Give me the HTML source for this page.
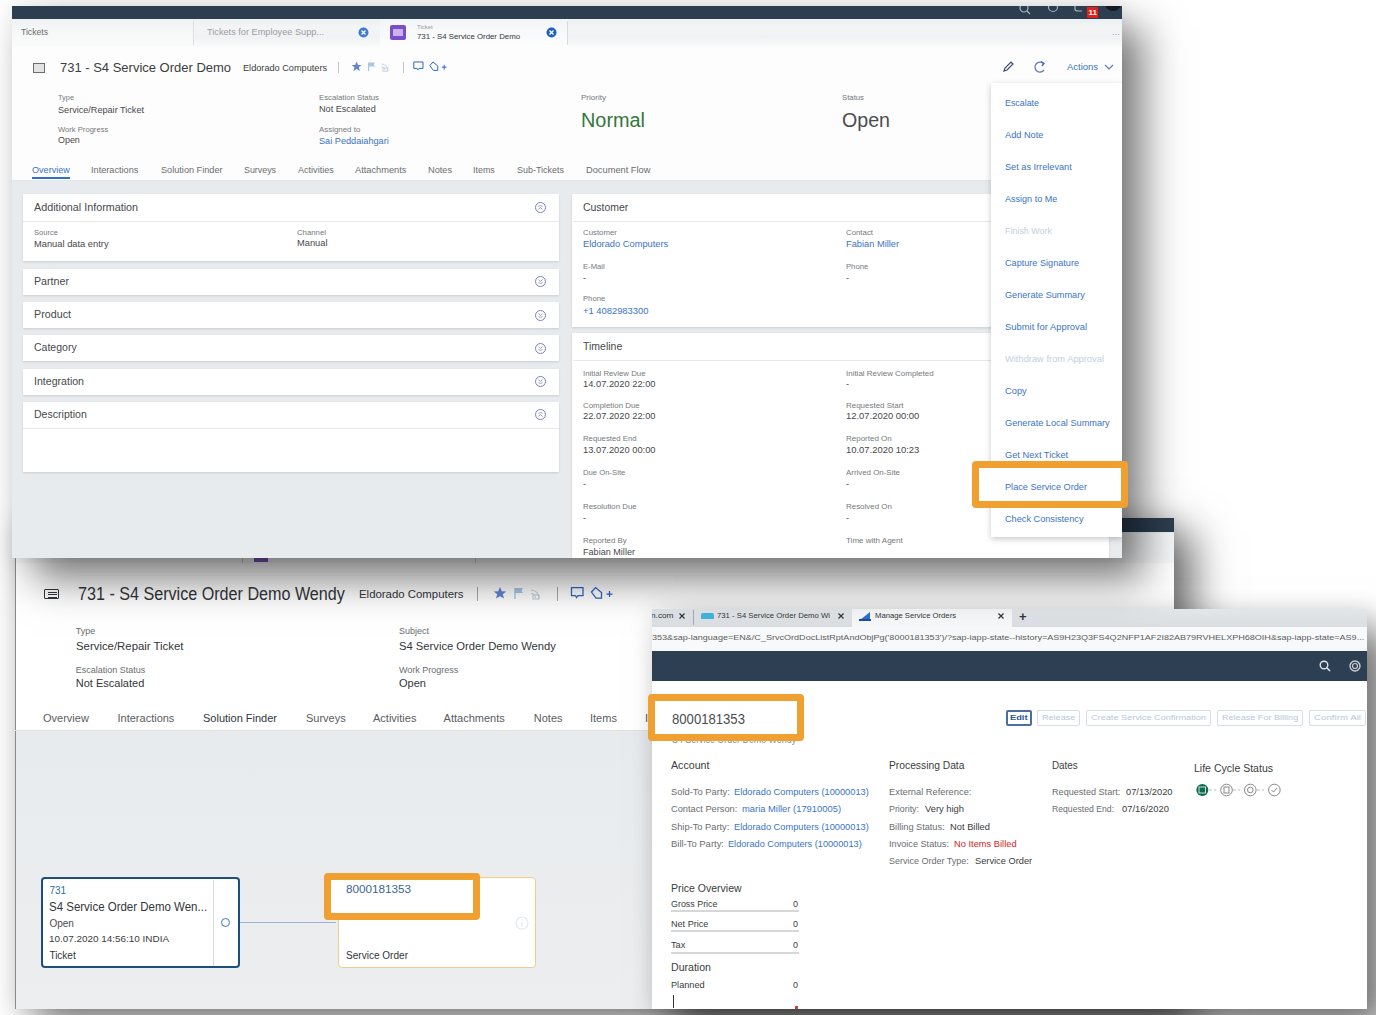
<!DOCTYPE html>
<html><head><meta charset="utf-8">
<style>
*{margin:0;padding:0;box-sizing:border-box}
html,body{width:1376px;height:1015px;overflow:hidden;background:#fff;font-family:"Liberation Sans",sans-serif;color:#32363a}
.layer{position:absolute;left:0;top:0;width:1376px;height:1015px}
.a{position:absolute;white-space:nowrap;line-height:1}
</style></head><body>

<div class="a" style="left:15px;top:518px;width:1159px;height:491px;box-shadow:20px 14px 38px 0 rgba(0,0,0,0.55)"></div>
<div class="a" style="left:15px;top:518px;width:1159px;height:491px;box-shadow:0 0 20px 2px rgba(0,0,0,.08)"></div>
<div class="layer" id="s2" style="clip-path:inset(518px 202px 6px 15px)">
<div class="a" style="left:15px;top:518px;width:1159px;height:492px;background:#fff;"></div>
<div class="a" style="left:15px;top:518px;width:1159px;height:14px;background:#2c3e50;"></div>
<div class="a" style="left:15px;top:532px;width:1159px;height:1px;background:#e6f2f2;"></div>
<div class="a" style="left:15px;top:533px;width:1159px;height:30px;background:#f7f8f9;"></div>
<div class="a" style="left:242px;top:540px;width:1px;height:25px;background:#ccc;"></div>
<div class="a" style="left:475px;top:540px;width:1px;height:25px;background:#ccc;"></div>
<div class="a" style="left:254px;top:552px;width:14px;height:10px;background:#7b52b9;"></div>
<div class="a" style="left:15px;top:563px;width:1159px;height:167px;background:#fff;"></div>
<div class="a" style="left:15px;top:518px;width:1px;height:492px;background:#8a8a8a;"></div>
<div class="a" style="left:44px;top:588.7px;width:15px;height:10.5px;background:#fff;border:1.5px solid #32363a;border-radius:1px"></div>
<div class="a" style="left:48px;top:591.5px;width:9px;height:1.3px;background:#32363a;"></div>
<div class="a" style="left:48px;top:594px;width:9px;height:1.3px;background:#32363a;"></div>
<div class="a" style="left:48px;top:596.5px;width:9px;height:1.3px;background:#32363a;"></div>
<div class="a" id="t1" style="left:77.7px;top:584.7px;font-size:18px;color:#32363a;transform:scaleX(0.896);transform-origin:0 0;">731 - S4 Service Order Demo Wendy</div>
<div class="a" id="t2" style="left:358.7px;top:588.6px;font-size:11px;color:#32363a;transform:scaleX(1.036);transform-origin:0 0;">Eldorado Computers</div>
<div class="a" style="left:477px;top:587px;width:1px;height:14px;background:#aaa;"></div>
<svg class="a" style="left:492.5px;top:584.5px;overflow:visible" width="125.0" height="16.0" viewBox="0 0 125 16"><path d="M7 2 L8.8 6.2 L13.2 6.4 L9.8 9.2 L11 13.6 L7 11.2 L3 13.6 L4.2 9.2 L0.8 6.4 L5.2 6.2 Z" fill="#5f86d6"/><path d="M22 3 v11" stroke="#a9c6e6" stroke-width="1.4"/><path d="M22 3 h8 l-1.5 2.5 l1.5 2.5 h-8 Z" fill="#a9c6e6"/><g fill="none" stroke="#c5d3e3" stroke-width="1.2"><path d="M38 5 a8 8 0 0 1 8 8"/><path d="M38 8.5 a4.5 4.5 0 0 1 4.5 4.5"/><rect x="40" y="10" width="6" height="4"/></g><g fill="none" stroke="#2a66c8" stroke-width="1.25"><path d="M78.5 2.5 h11.5 v8 h-5 l-1.5 2 l-1 -2 h-4 Z"/><path d="M98.5 7 l4 -4.5 l6 5 v5.5 h-5.5 Z"/><path d="M113.5 9 h6 M116.5 6 v6"/></g></svg>
<div class="a" style="left:557px;top:587px;width:1px;height:14px;background:#aaa;"></div>
<div class="a" id="t3" style="left:75.8px;top:626.6px;font-size:9px;color:#6a6d70;">Type</div>
<div class="a" id="t4" style="left:75.8px;top:640.9px;font-size:11px;color:#32363a;transform:scaleX(1.034);transform-origin:0 0;">Service/Repair Ticket</div>
<div class="a" id="t5" style="left:75.8px;top:665.9px;font-size:9px;color:#6a6d70;">Escalation Status</div>
<div class="a" id="t6" style="left:75.8px;top:678.3px;font-size:11px;color:#32363a;">Not Escalated</div>
<div class="a" id="t7" style="left:399px;top:626.6px;font-size:9px;color:#6a6d70;">Subject</div>
<div class="a" id="t8" style="left:399px;top:640.9px;font-size:11px;color:#32363a;transform:scaleX(1.020);transform-origin:0 0;">S4 Service Order Demo Wendy</div>
<div class="a" id="t9" style="left:399px;top:665.9px;font-size:9px;color:#6a6d70;">Work Progress</div>
<div class="a" id="t10" style="left:399px;top:678.3px;font-size:11px;color:#32363a;">Open</div>
<div class="a" id="t11" style="left:43px;top:712.8px;font-size:11px;color:#5a5d60;">Overview</div>
<div class="a" id="t12" style="left:117.5px;top:712.8px;font-size:11px;color:#5a5d60;">Interactions</div>
<div class="a" id="t13" style="left:203px;top:712.8px;font-size:11px;color:#32363a;">Solution Finder</div>
<div class="a" id="t14" style="left:306px;top:712.8px;font-size:11px;color:#5a5d60;">Surveys</div>
<div class="a" id="t15" style="left:373px;top:712.8px;font-size:11px;color:#5a5d60;">Activities</div>
<div class="a" id="t16" style="left:443.6px;top:712.8px;font-size:11px;color:#5a5d60;">Attachments</div>
<div class="a" id="t17" style="left:533.8px;top:712.8px;font-size:11px;color:#5a5d60;">Notes</div>
<div class="a" id="t18" style="left:590px;top:712.8px;font-size:11px;color:#5a5d60;">Items</div>
<div class="a" id="t19" style="left:645px;top:712.8px;font-size:11px;color:#5a5d60;">I</div>
<div class="a" style="left:15px;top:730px;width:1159px;height:1px;background:#dfe1e3;"></div>
<div class="a" style="left:16px;top:731px;width:1158px;height:279px;background:linear-gradient(#e8ebed,#eceef0);"></div>
<div class="a" style="left:40.5px;top:877.2px;width:199px;height:91px;background:#fff;border:2px solid #1d4f7c;border-radius:4px"></div>
<div class="a" style="left:212.5px;top:880px;width:1px;height:86px;background:#d5dbe3;"></div>
<div class="a" id="t20" style="left:49.4px;top:885.6px;font-size:10px;color:#2a6fa8;">731</div>
<div class="a" id="t21" style="left:49.4px;top:901.1px;font-size:12px;color:#32363a;transform:scaleX(0.957);transform-origin:0 0;">S4 Service Order Demo Wen...</div>
<div class="a" id="t22" style="left:49.4px;top:918.8px;font-size:10px;color:#4a4d50;">Open</div>
<div class="a" id="t23" style="left:49.4px;top:935.1px;font-size:9px;color:#3a3d40;transform:scaleX(1.100);transform-origin:0 0;">10.07.2020 14:56:10 INDIA</div>
<div class="a" id="t24" style="left:49.4px;top:950.9px;font-size:10px;color:#32363a;">Ticket</div>
<div class="a" style="left:221px;top:918px;width:9px;height:9px;border:1px solid #3b74c4;border-radius:50%"></div>
<div class="a" style="left:240px;top:922px;width:96px;height:1px;background:#9db3d9;"></div>
<div class="a" style="left:338px;top:877px;width:198px;height:91px;background:#fff;border:1px solid #f5cc86;border-radius:4px"></div>
<div class="a" id="t25" style="left:346.3px;top:950.9px;font-size:10px;color:#32363a;transform:scaleX(1.005);transform-origin:0 0;">Service Order</div>
<svg class="a" style="left:515px;top:916px" width="14" height="14" viewBox="0 0 14 14"><circle cx="7" cy="7" r="6" fill="none" stroke="#e6eaee" stroke-width="1.2"/><path d="M7 6v4.5M7 3.5v1.2" stroke="#e6eaee" stroke-width="1.3"/></svg>
</div>
<div class="a" style="left:324px;top:873px;width:156px;height:47px;background:#fff;border:7px solid #f0a030;border-radius:4px"></div>
<div class="a" id="t26" style="left:346.3px;top:885.1px;font-size:10px;color:#3a6590;transform:scaleX(1.169);transform-origin:0 0;">8000181353</div>
<div class="a" style="left:652px;top:609px;width:715px;height:400px;box-shadow:22px 22px 36px 0 rgba(0,0,0,0.52)"></div>
<div class="a" style="left:652px;top:609px;width:715px;height:400px;box-shadow:0 0 20px 2px rgba(0,0,0,.08)"></div>
<div class="layer" id="s3" style="clip-path:inset(609px 9px 6px 652px)">
<div class="a" style="left:652px;top:609px;width:715px;height:400px;background:#fff;"></div>
<div class="a" style="left:652px;top:609px;width:715px;height:18px;background:linear-gradient(#e3e6e9,#dadde1);"></div>
<div class="a" style="left:852px;top:609px;width:160px;height:18px;background:#f6f7f8;"></div>
<div class="a" id="t27" style="left:651px;top:611.8px;font-size:8px;color:#32363a;transform:scaleX(1.032);transform-origin:0 0;">n.com</div>
<svg class="a" style="left:677.5px;top:612.0px" width="8" height="8" viewBox="0 0 8 8"><path d="M1.5 1.5L6.5 6.5M6.5 1.5L1.5 6.5" stroke="#32363a" stroke-width="1.2"/></svg>
<div class="a" style="left:693px;top:610px;width:1px;height:15px;background:#a8abb0;"></div>
<div class="a" style="left:701px;top:612.5px;width:13px;height:6px;background:#42b4dc;border-radius:2px 2px 0 0"></div>
<div class="a" id="t28" style="left:716.5px;top:611.8px;font-size:8px;color:#32363a;transform:scaleX(0.966);transform-origin:0 0;">731 - S4 Service Order Demo Wi</div>
<svg class="a" style="left:836.5px;top:612.0px" width="8" height="8" viewBox="0 0 8 8"><path d="M1.5 1.5L6.5 6.5M6.5 1.5L1.5 6.5" stroke="#32363a" stroke-width="1.2"/></svg>
<svg class="a" style="left:859px;top:611px" width="12" height="10" viewBox="0 0 12 10"><path d="M1 9 L11 9 L11 1 Z" fill="#2f6fc9"/><rect x="0" y="8" width="12" height="2" fill="#1a4f9c"/></svg>
<div class="a" id="t29" style="left:875px;top:611.8px;font-size:8px;color:#32363a;transform:scaleX(0.959);transform-origin:0 0;">Manage Service Orders</div>
<svg class="a" style="left:996.5px;top:612.0px" width="8" height="8" viewBox="0 0 8 8"><path d="M1.5 1.5L6.5 6.5M6.5 1.5L1.5 6.5" stroke="#32363a" stroke-width="1.2"/></svg>
<div class="a" id="t30" style="left:1019px;top:609.6px;font-size:13px;color:#32363a;font-weight:bold;">+</div>
<div class="a" style="left:652px;top:627px;width:715px;height:24px;background:#f8f9fa;"></div>
<div class="a" id="t31" style="left:652px;top:634.1px;font-size:8px;color:#5a5d60;transform:scaleX(1.131);transform-origin:0 0;">353&amp;sap-language=EN&amp;/C_SrvcOrdDocListRptAndObjPg('8000181353')/?sap-iapp-state--history=AS9H23Q3FS4Q2NFP1AF2I82AB79RVHELXPH68OIH&amp;sap-iapp-state=AS9...</div>
<div class="a" style="left:652px;top:651px;width:715px;height:30px;background:#2d3f52;"></div>
<svg class="a" style="left:1318px;top:659px" width="14" height="14" viewBox="0 0 14 14"><circle cx="6" cy="6" r="3.8" fill="none" stroke="#dfe4ea" stroke-width="1.4"/><path d="M9 9 L12 12" stroke="#dfe4ea" stroke-width="1.6"/></svg>
<svg class="a" style="left:1348px;top:659px" width="14" height="14" viewBox="0 0 14 14"><circle cx="7" cy="7" r="5" fill="none" stroke="#c8cdd3" stroke-width="1.4"/><circle cx="7" cy="7" r="2.5" fill="none" stroke="#c8cdd3" stroke-width="1.2"/></svg>
<div class="a" id="t32" style="left:672px;top:734.6px;font-size:10px;color:#8a8d90;transform:scaleX(0.887);transform-origin:0 0;">S4 Service Order Demo Wendy</div>
<div class="a" style="left:1006px;top:710.3px;width:25.5px;height:16px;background:#fff;border:2px solid #4a6e9e;border-radius:2px"></div>
<div class="a" id="t33" style="left:1010px;top:714.4px;font-size:8px;color:#2d5a96;font-weight:bold;transform:scaleX(1.158);transform-origin:0 0;">Edit</div>
<div class="a" style="left:1037px;top:710.3px;width:43.299999999999955px;height:16px;background:#fff;border:1px solid #d5dde8;border-radius:2px"></div>
<div class="a" id="t34" style="left:1042px;top:714.4px;font-size:8px;color:#b8c8de;transform:scaleX(1.134);transform-origin:0 0;">Release</div>
<div class="a" style="left:1086px;top:710.3px;width:125px;height:16px;background:#fff;border:1px solid #d5dde8;border-radius:2px"></div>
<div class="a" id="t35" style="left:1091px;top:714.4px;font-size:8px;color:#b8c8de;transform:scaleX(1.144);transform-origin:0 0;">Create Service Confirmation</div>
<div class="a" style="left:1216.6px;top:710.3px;width:86.20000000000005px;height:16px;background:#fff;border:1px solid #d5dde8;border-radius:2px"></div>
<div class="a" id="t36" style="left:1221.6px;top:714.4px;font-size:8px;color:#b8c8de;transform:scaleX(1.135);transform-origin:0 0;">Release For Billing</div>
<div class="a" style="left:1309px;top:710.3px;width:57px;height:16px;background:#fff;border:1px solid #d5dde8;border-radius:2px"></div>
<div class="a" id="t37" style="left:1314px;top:714.4px;font-size:8px;color:#b8c8de;transform:scaleX(1.215);transform-origin:0 0;">Confirm All</div>
<div class="a" id="t38" style="left:671px;top:760.5px;font-size:10px;color:#3a3d40;transform:scaleX(1.065);transform-origin:0 0;">Account</div>
<div class="a" id="t39" style="left:889.2px;top:760.5px;font-size:10px;color:#3a3d40;transform:scaleX(1.028);transform-origin:0 0;">Processing Data</div>
<div class="a" id="t40" style="left:1052.3px;top:761.1px;font-size:10px;color:#3a3d40;transform:scaleX(0.984);transform-origin:0 0;">Dates</div>
<div class="a" id="t41" style="left:1194px;top:764.3px;font-size:10px;color:#3a3d40;transform:scaleX(1.053);transform-origin:0 0;">Life Cycle Status</div>
<div class="a" id="t42" style="left:671px;top:787.6px;font-size:9px;color:#6a6d70;transform:scaleX(1.040);transform-origin:0 0;">Sold-To Party:</div>
<div class="a" id="t43" style="left:733.6px;top:787.6px;font-size:9px;color:#3b74c4;transform:scaleX(1.028);transform-origin:0 0;">Eldorado Computers (10000013)</div>
<div class="a" id="t44" style="left:671px;top:804.6px;font-size:9px;color:#6a6d70;transform:scaleX(1.027);transform-origin:0 0;">Contact Person:</div>
<div class="a" id="t45" style="left:741.6px;top:804.6px;font-size:9px;color:#3b74c4;transform:scaleX(1.042);transform-origin:0 0;">maria Miller (17910005)</div>
<div class="a" id="t46" style="left:671px;top:822.6px;font-size:9px;color:#6a6d70;transform:scaleX(1.031);transform-origin:0 0;">Ship-To Party:</div>
<div class="a" id="t47" style="left:733.6px;top:822.6px;font-size:9px;color:#3b74c4;transform:scaleX(1.028);transform-origin:0 0;">Eldorado Computers (10000013)</div>
<div class="a" id="t48" style="left:671px;top:840.2px;font-size:9px;color:#6a6d70;transform:scaleX(1.049);transform-origin:0 0;">Bill-To Party:</div>
<div class="a" id="t49" style="left:728px;top:840.2px;font-size:9px;color:#3b74c4;transform:scaleX(1.020);transform-origin:0 0;">Eldorado Computers (10000013)</div>
<div class="a" id="t50" style="left:889.2px;top:787.6px;font-size:9px;color:#6a6d70;transform:scaleX(1.036);transform-origin:0 0;">External Reference:</div>
<div class="a" id="t51" style="left:889.2px;top:804.6px;font-size:9px;color:#6a6d70;transform:scaleX(0.983);transform-origin:0 0;">Priority:</div>
<div class="a" id="t52" style="left:925px;top:804.6px;font-size:9px;color:#3a3d40;transform:scaleX(1.039);transform-origin:0 0;">Very high</div>
<div class="a" id="t53" style="left:889.2px;top:822.6px;font-size:9px;color:#6a6d70;transform:scaleX(1.020);transform-origin:0 0;">Billing Status:</div>
<div class="a" id="t54" style="left:950px;top:822.6px;font-size:9px;color:#3a3d40;transform:scaleX(1.038);transform-origin:0 0;">Not Billed</div>
<div class="a" id="t55" style="left:889.2px;top:840.2px;font-size:9px;color:#6a6d70;transform:scaleX(1.016);transform-origin:0 0;">Invoice Status:</div>
<div class="a" id="t56" style="left:954px;top:840.2px;font-size:9px;color:#d0271d;transform:scaleX(1.034);transform-origin:0 0;">No Items Billed</div>
<div class="a" id="t57" style="left:889.2px;top:857.3px;font-size:9px;color:#6a6d70;transform:scaleX(0.998);transform-origin:0 0;">Service Order Type:</div>
<div class="a" id="t58" style="left:975px;top:857.3px;font-size:9px;color:#3a3d40;transform:scaleX(1.030);transform-origin:0 0;">Service Order</div>
<div class="a" id="t59" style="left:1052.3px;top:787.8px;font-size:9px;color:#6a6d70;transform:scaleX(1.011);transform-origin:0 0;">Requested Start:</div>
<div class="a" id="t60" style="left:1126px;top:787.8px;font-size:9px;color:#3a3d40;transform:scaleX(1.032);transform-origin:0 0;">07/13/2020</div>
<div class="a" id="t61" style="left:1052.3px;top:805.2px;font-size:9px;color:#6a6d70;transform:scaleX(0.961);transform-origin:0 0;">Requested End:</div>
<div class="a" id="t62" style="left:1122.4px;top:805.2px;font-size:9px;color:#3a3d40;transform:scaleX(1.043);transform-origin:0 0;">07/16/2020</div>
<svg class="a" style="left:1194px;top:782px" width="90" height="16" viewBox="0 0 90 16"><circle cx="8.3" cy="8" r="6" fill="#0e6b4a"/><rect x="5" y="5" width="6.5" height="6" fill="none" stroke="#cde" stroke-width="1"/><g fill="none" stroke="#888" stroke-width="1"><circle cx="32.5" cy="8" r="5.8"/><circle cx="56.3" cy="8" r="5.8"/><circle cx="80.4" cy="8" r="5.8"/><path d="M15 8h3M20 8h2M39 8h3M44 8h2M63 8h3M68 8h2" stroke="#bbb"/><rect x="30" y="5" width="5" height="6"/><circle cx="56.3" cy="8" r="2.8"/><path d="M77.5 8 l2 2 l3.5 -4"/></g></svg>
<div class="a" id="t63" style="left:671px;top:884.1px;font-size:10px;color:#3a3d40;transform:scaleX(1.050);transform-origin:0 0;">Price Overview</div>
<div class="a" id="t64" style="left:671px;top:899.6px;font-size:9px;color:#3a3d40;transform:scaleX(0.989);transform-origin:0 0;">Gross Price</div>
<div class="a" id="t65" style="left:793px;top:899.6px;font-size:9px;color:#3a3d40;">0</div>
<div class="a" style="left:671px;top:910px;width:128px;height:2px;background:#d5d7da;"></div>
<div class="a" id="t66" style="left:671px;top:919.9px;font-size:9px;color:#3a3d40;transform:scaleX(1.010);transform-origin:0 0;">Net Price</div>
<div class="a" id="t67" style="left:793px;top:919.9px;font-size:9px;color:#3a3d40;">0</div>
<div class="a" style="left:671px;top:930.3px;width:128px;height:2px;background:#d5d7da;"></div>
<div class="a" id="t68" style="left:671px;top:941.3px;font-size:9px;color:#3a3d40;transform:scaleX(1.027);transform-origin:0 0;">Tax</div>
<div class="a" id="t69" style="left:793px;top:941.3px;font-size:9px;color:#3a3d40;">0</div>
<div class="a" style="left:671px;top:951.7px;width:128px;height:2px;background:#d5d7da;"></div>
<div class="a" id="t70" style="left:671px;top:963.1px;font-size:10px;color:#3a3d40;transform:scaleX(1.058);transform-origin:0 0;">Duration</div>
<div class="a" id="t71" style="left:671px;top:980.9px;font-size:9px;color:#3a3d40;transform:scaleX(1.020);transform-origin:0 0;">Planned</div>
<div class="a" id="t72" style="left:793px;top:980.9px;font-size:9px;color:#3a3d40;">0</div>
<div class="a" style="left:673px;top:995px;width:1.3px;height:13px;background:#32363a;"></div>
<div class="a" style="left:795px;top:1006px;width:3px;height:3px;background:#d04040;"></div>
</div>
<div class="a" style="left:648px;top:694px;width:156px;height:47px;background:#fff;border:7px solid #f0a030;border-radius:4px"></div>
<div class="a" id="t73" style="left:672px;top:711.5px;font-size:14px;color:#4a4d50;transform:scaleX(0.937);transform-origin:0 0;">8000181353</div>
<div class="a" style="left:12px;top:6px;width:1110px;height:552px;box-shadow:22px 22px 38px 0 rgba(0,0,0,0.5)"></div>
<div class="a" style="left:12px;top:6px;width:1110px;height:552px;box-shadow:0 0 20px 2px rgba(0,0,0,.08)"></div>
<div class="layer" id="s1" style="clip-path:inset(6px 254px 457px 12px)">
<div class="a" style="left:12px;top:6px;width:1110px;height:552px;background:#e8ebed;"></div>
<div class="a" style="left:12px;top:6px;width:1110px;height:13px;background:#2c3e50;"></div>
<svg class="a" style="left:1015px;top:6px" width="70" height="13" viewBox="0 0 70 13"><g fill="none" stroke="#a9b3be" stroke-width="1.2"><circle cx="9" cy="2" r="4"/><path d="M12 5 L15 8"/><circle cx="38" cy="1" r="4.5"/><path d="M60 0 v3 q0 2 3 2 h4"/></g></svg>
<div class="a" style="left:1087px;top:7px;width:11px;height:11px;background:#e3201b;"></div>
<div class="a" id="t74" style="left:1088.5px;top:8.6px;font-size:8px;color:#fff;font-weight:bold;">11</div>
<div class="a" style="left:1105px;top:-4px;width:16px;height:15px;background:#151a22;border-radius:50%"></div>
<div class="a" style="left:12px;top:19px;width:1110px;height:28px;background:linear-gradient(#e9f0f3 0%,#f4f5f5 30%,#f0f2f3 65%,#fafbfb 100%);"></div>
<div class="a" style="left:12px;top:19px;width:181px;height:28px;background:linear-gradient(#eef2f4 0%,#f6f7f7 40%,#fafbfb 100%);"></div>
<div class="a" style="left:380px;top:19px;width:188px;height:28px;background:linear-gradient(#f2f5f7,#fdfdfd);"></div>
<div class="a" style="left:193px;top:21px;width:1px;height:24px;background:#dcdfe2;"></div>
<div class="a" style="left:567px;top:21px;width:1px;height:24px;background:#e0d8dc;"></div>
<div class="a" id="t75" style="left:21px;top:27.6px;font-size:9px;color:#6a6d70;transform:scaleX(0.958);transform-origin:0 0;">Tickets</div>
<div class="a" id="t76" style="left:207px;top:28.1px;font-size:9px;color:#9a9da0;transform:scaleX(1.020);transform-origin:0 0;">Tickets for Employee Supp...</div>
<svg class="a" style="left:357.5px;top:26.5px" width="11" height="11" viewBox="0 0 11 11"><circle cx="5.5" cy="5.5" r="5" fill="#3a7ad0"/><path d="M3.5 3.5l4 4M7.5 3.5l-4 4" stroke="#fff" stroke-width="1.4"/></svg>
<div class="a" style="left:390px;top:24.5px;width:16px;height:15.5px;background:#7a4ec8;border-radius:2px"></div>
<div class="a" style="left:393px;top:29px;width:10px;height:7px;background:#c9b2ee;"></div>
<div class="a" id="t77" style="left:417px;top:23.7px;font-size:6px;color:#9a9da0;">Ticket</div>
<div class="a" id="t78" style="left:417px;top:33.0px;font-size:7px;color:#32363a;transform:scaleX(1.117);transform-origin:0 0;">731 - S4 Service Order Demo</div>
<svg class="a" style="left:545.5px;top:26.5px" width="11" height="11" viewBox="0 0 11 11"><circle cx="5.5" cy="5.5" r="5" fill="#1f5fbf"/><path d="M3.5 3.5l4 4M7.5 3.5l-4 4" stroke="#fff" stroke-width="1.4"/></svg>
<div class="a" id="t79" style="left:1112px;top:31.1px;font-size:8px;color:#7a6fc0;">···</div>
<div class="a" style="left:12px;top:47px;width:1110px;height:133px;background:#fdfdfd;"></div>
<div class="a" style="left:33px;top:63px;width:12px;height:10px;background:#e3e3e3;border:1px solid #6a6d70"></div>
<div class="a" id="t80" style="left:60px;top:61.1px;font-size:13px;color:#3a3d40;transform:scaleX(0.999);transform-origin:0 0;">731 - S4 Service Order Demo</div>
<div class="a" id="t81" style="left:242.6px;top:63.6px;font-size:9px;color:#3a3d40;transform:scaleX(1.018);transform-origin:0 0;">Eldorado Computers</div>
<div class="a" style="left:338px;top:62px;width:1px;height:11px;background:#c4c4c4;"></div>
<svg class="a" style="left:350.8px;top:60.1px;overflow:visible" width="100.0" height="12.8" viewBox="0 0 125 16"><path d="M7 2 L8.8 6.2 L13.2 6.4 L9.8 9.2 L11 13.6 L7 11.2 L3 13.6 L4.2 9.2 L0.8 6.4 L5.2 6.2 Z" fill="#5f86d6"/><path d="M22 3 v11" stroke="#a9c6e6" stroke-width="1.4"/><path d="M22 3 h8 l-1.5 2.5 l1.5 2.5 h-8 Z" fill="#a9c6e6"/><g fill="none" stroke="#c5d3e3" stroke-width="1.2"><path d="M38 5 a8 8 0 0 1 8 8"/><path d="M38 8.5 a4.5 4.5 0 0 1 4.5 4.5"/><rect x="40" y="10" width="6" height="4"/></g><g fill="none" stroke="#2a66c8" stroke-width="1.25"><path d="M78.5 2.5 h11.5 v8 h-5 l-1.5 2 l-1 -2 h-4 Z"/><path d="M98.5 7 l4 -4.5 l6 5 v5.5 h-5.5 Z"/><path d="M113.5 9 h6 M116.5 6 v6"/></g></svg>
<div class="a" style="left:403px;top:62px;width:1px;height:11px;background:#c4c4c4;"></div>
<svg class="a" style="left:1002px;top:61px" width="12" height="12" viewBox="0 0 12 12"><path d="M2 10 L3 7 L9 1 L11 3 L5 9 Z" fill="none" stroke="#3a4a70" stroke-width="1.2"/></svg>
<svg class="a" style="left:1033px;top:60px" width="14" height="14" viewBox="0 0 14 14"><path d="M10.5 3.5 A5 5 0 1 0 11 10" fill="none" stroke="#6a7ab8" stroke-width="1.3"/><path d="M8 1.5 L11 3.5 L9 6" fill="none" stroke="#2f6fc9" stroke-width="1.3"/></svg>
<div class="a" id="t82" style="left:1067px;top:63.1px;font-size:9px;color:#3b74c4;transform:scaleX(1.050);transform-origin:0 0;">Actions</div>
<svg class="a" style="left:1104px;top:64px" width="10" height="7" viewBox="0 0 10 7"><path d="M1 1 L5 5 L9 1" fill="none" stroke="#5a7ab8" stroke-width="1.2"/></svg>
<div class="a" id="t83" style="left:58px;top:94.1px;font-size:7px;color:#76797c;transform:scaleX(1.053);transform-origin:0 0;">Type</div>
<div class="a" id="t84" style="left:58px;top:105.6px;font-size:9px;color:#47494c;transform:scaleX(1.011);transform-origin:0 0;">Service/Repair Ticket</div>
<div class="a" id="t85" style="left:58px;top:125.6px;font-size:7px;color:#76797c;transform:scaleX(1.089);transform-origin:0 0;">Work Progress</div>
<div class="a" id="t86" style="left:58px;top:136.1px;font-size:9px;color:#47494c;transform:scaleX(0.990);transform-origin:0 0;">Open</div>
<div class="a" id="t87" style="left:319px;top:94.1px;font-size:7px;color:#76797c;transform:scaleX(1.109);transform-origin:0 0;">Escalation Status</div>
<div class="a" id="t88" style="left:319px;top:104.6px;font-size:9px;color:#47494c;transform:scaleX(1.012);transform-origin:0 0;">Not Escalated</div>
<div class="a" id="t89" style="left:319px;top:125.6px;font-size:7px;color:#76797c;transform:scaleX(1.129);transform-origin:0 0;">Assigned to</div>
<div class="a" id="t90" style="left:319px;top:136.6px;font-size:9px;color:#3b74c4;transform:scaleX(1.018);transform-origin:0 0;">Sai Peddaiahgari</div>
<div class="a" id="t91" style="left:581px;top:94.1px;font-size:7px;color:#76797c;transform:scaleX(1.148);transform-origin:0 0;">Priority</div>
<div class="a" id="t92" style="left:581px;top:110.2px;font-size:20px;color:#33783c;transform:scaleX(0.993);transform-origin:0 0;">Normal</div>
<div class="a" id="t93" style="left:842px;top:94.1px;font-size:7px;color:#76797c;transform:scaleX(1.108);transform-origin:0 0;">Status</div>
<div class="a" id="t94" style="left:842px;top:110.2px;font-size:20px;color:#4a4d50;transform:scaleX(0.981);transform-origin:0 0;">Open</div>
<div class="a" id="t95" style="left:32px;top:165.6px;font-size:9px;color:#3b74c4;transform:scaleX(1.008);transform-origin:0 0;">Overview</div>
<div class="a" id="t96" style="left:91px;top:165.6px;font-size:9px;color:#6a6d70;transform:scaleX(1.019);transform-origin:0 0;">Interactions</div>
<div class="a" id="t97" style="left:160.6px;top:165.6px;font-size:9px;color:#6a6d70;transform:scaleX(1.017);transform-origin:0 0;">Solution Finder</div>
<div class="a" id="t98" style="left:244px;top:165.6px;font-size:9px;color:#6a6d70;transform:scaleX(0.984);transform-origin:0 0;">Surveys</div>
<div class="a" id="t99" style="left:298px;top:165.6px;font-size:9px;color:#6a6d70;transform:scaleX(1.008);transform-origin:0 0;">Activities</div>
<div class="a" id="t100" style="left:355px;top:165.6px;font-size:9px;color:#6a6d70;transform:scaleX(1.029);transform-origin:0 0;">Attachments</div>
<div class="a" id="t101" style="left:428px;top:165.6px;font-size:9px;color:#6a6d70;transform:scaleX(1.021);transform-origin:0 0;">Notes</div>
<div class="a" id="t102" style="left:473px;top:165.6px;font-size:9px;color:#6a6d70;transform:scaleX(0.990);transform-origin:0 0;">Items</div>
<div class="a" id="t103" style="left:517px;top:165.6px;font-size:9px;color:#6a6d70;transform:scaleX(0.996);transform-origin:0 0;">Sub-Tickets</div>
<div class="a" id="t104" style="left:586px;top:165.6px;font-size:9px;color:#6a6d70;transform:scaleX(1.031);transform-origin:0 0;">Document Flow</div>
<div class="a" style="left:32px;top:177px;width:38px;height:2px;background:#2f6fc9;"></div>
<div class="a" style="left:12px;top:180px;width:1110px;height:1px;background:#e4e6e8;"></div>
<div class="a" style="left:23px;top:194.4px;width:536px;height:66.29999999999998px;background:#fff;box-shadow:0 1px 2px rgba(0,0,0,.12)"></div>
<div class="a" id="t105" style="left:33.6px;top:202.5px;font-size:10px;color:#47494c;transform:scaleX(1.075);transform-origin:0 0;">Additional Information</div>
<svg class="a" style="left:535.3px;top:201.9px" width="11" height="11" viewBox="0 0 11 11"><circle cx="5.5" cy="5.5" r="5" fill="none" stroke="#7a7fc0" stroke-width="1"/><path d="M3.5 5 L5.5 3 L7.5 5 M3.5 7.5 L5.5 5.5 L7.5 7.5" fill="none" stroke="#8a8fc8" stroke-width="0.9"/></svg>
<div class="a" style="left:23px;top:220.5px;width:536px;height:1px;background:#e8e8e8;"></div>
<div class="a" id="t106" style="left:33.6px;top:228.9px;font-size:7px;color:#76797c;transform:scaleX(1.082);transform-origin:0 0;">Source</div>
<div class="a" id="t107" style="left:33.6px;top:240.1px;font-size:9px;color:#47494c;transform:scaleX(1.035);transform-origin:0 0;">Manual data entry</div>
<div class="a" id="t108" style="left:296.5px;top:228.9px;font-size:7px;color:#76797c;transform:scaleX(1.112);transform-origin:0 0;">Channel</div>
<div class="a" id="t109" style="left:296.5px;top:238.6px;font-size:9px;color:#47494c;transform:scaleX(1.033);transform-origin:0 0;">Manual</div>
<div class="a" style="left:23px;top:268.5px;width:536px;height:26.19999999999999px;background:#fff;box-shadow:0 1px 2px rgba(0,0,0,.12)"></div>
<div class="a" id="t110" style="left:33.6px;top:276.7px;font-size:10px;color:#47494c;transform:scaleX(1.067);transform-origin:0 0;">Partner</div>
<svg class="a" style="left:535.3px;top:276.1px" width="11" height="11" viewBox="0 0 11 11"><circle cx="5.5" cy="5.5" r="5" fill="none" stroke="#7a7fc0" stroke-width="1"/><path d="M3.5 3.5 L5.5 5.5 L7.5 3.5 M3.5 6 L5.5 8 L7.5 6" fill="none" stroke="#8a8fc8" stroke-width="0.9"/></svg>
<div class="a" style="left:23px;top:302px;width:536px;height:26px;background:#fff;box-shadow:0 1px 2px rgba(0,0,0,.12)"></div>
<div class="a" id="t111" style="left:33.6px;top:310.1px;font-size:10px;color:#47494c;transform:scaleX(1.073);transform-origin:0 0;">Product</div>
<svg class="a" style="left:535.3px;top:309.5px" width="11" height="11" viewBox="0 0 11 11"><circle cx="5.5" cy="5.5" r="5" fill="none" stroke="#7a7fc0" stroke-width="1"/><path d="M3.5 3.5 L5.5 5.5 L7.5 3.5 M3.5 6 L5.5 8 L7.5 6" fill="none" stroke="#8a8fc8" stroke-width="0.9"/></svg>
<div class="a" style="left:23px;top:335px;width:536px;height:26.399999999999977px;background:#fff;box-shadow:0 1px 2px rgba(0,0,0,.12)"></div>
<div class="a" id="t112" style="left:33.6px;top:343.3px;font-size:10px;color:#47494c;transform:scaleX(1.052);transform-origin:0 0;">Category</div>
<svg class="a" style="left:535.3px;top:342.7px" width="11" height="11" viewBox="0 0 11 11"><circle cx="5.5" cy="5.5" r="5" fill="none" stroke="#7a7fc0" stroke-width="1"/><path d="M3.5 3.5 L5.5 5.5 L7.5 3.5 M3.5 6 L5.5 8 L7.5 6" fill="none" stroke="#8a8fc8" stroke-width="0.9"/></svg>
<div class="a" style="left:23px;top:368.8px;width:536px;height:25.80000000000001px;background:#fff;box-shadow:0 1px 2px rgba(0,0,0,.12)"></div>
<div class="a" id="t113" style="left:33.6px;top:376.8px;font-size:10px;color:#47494c;transform:scaleX(1.058);transform-origin:0 0;">Integration</div>
<svg class="a" style="left:535.3px;top:376.2px" width="11" height="11" viewBox="0 0 11 11"><circle cx="5.5" cy="5.5" r="5" fill="none" stroke="#7a7fc0" stroke-width="1"/><path d="M3.5 3.5 L5.5 5.5 L7.5 3.5 M3.5 6 L5.5 8 L7.5 6" fill="none" stroke="#8a8fc8" stroke-width="0.9"/></svg>
<div class="a" style="left:23px;top:402px;width:536px;height:70.19999999999999px;background:#fff;box-shadow:0 1px 2px rgba(0,0,0,.12)"></div>
<div class="a" id="t114" style="left:33.6px;top:410.0px;font-size:10px;color:#47494c;transform:scaleX(1.055);transform-origin:0 0;">Description</div>
<svg class="a" style="left:535.3px;top:409.4px" width="11" height="11" viewBox="0 0 11 11"><circle cx="5.5" cy="5.5" r="5" fill="none" stroke="#7a7fc0" stroke-width="1"/><path d="M3.5 5 L5.5 3 L7.5 5 M3.5 7.5 L5.5 5.5 L7.5 7.5" fill="none" stroke="#8a8fc8" stroke-width="0.9"/></svg>
<div class="a" style="left:23px;top:427.7px;width:536px;height:1px;background:#e8e8e8;"></div>
<div class="a" style="left:572px;top:194.4px;width:537px;height:133px;background:#fff;box-shadow:0 1px 2px rgba(0,0,0,.12)"></div>
<div class="a" id="t115" style="left:583px;top:202.6px;font-size:10px;color:#47494c;transform:scaleX(1.045);transform-origin:0 0;">Customer</div>
<div class="a" style="left:573px;top:220.5px;width:536px;height:1px;background:#e8e8e8;"></div>
<div class="a" id="t116" style="left:583px;top:228.6px;font-size:7px;color:#76797c;transform:scaleX(1.120);transform-origin:0 0;">Customer</div>
<div class="a" id="t117" style="left:583px;top:240.1px;font-size:9px;color:#3b74c4;transform:scaleX(1.033);transform-origin:0 0;">Eldorado Computers</div>
<div class="a" id="t118" style="left:846px;top:228.6px;font-size:7px;color:#76797c;transform:scaleX(1.119);transform-origin:0 0;">Contact</div>
<div class="a" id="t119" style="left:846px;top:240.1px;font-size:9px;color:#3b74c4;transform:scaleX(1.030);transform-origin:0 0;">Fabian Miller</div>
<div class="a" id="t120" style="left:583px;top:262.6px;font-size:7px;color:#76797c;transform:scaleX(1.094);transform-origin:0 0;">E-Mail</div>
<div class="a" id="t121" style="left:583px;top:274.1px;font-size:9px;color:#47494c;">-</div>
<div class="a" id="t122" style="left:846px;top:262.6px;font-size:7px;color:#76797c;transform:scaleX(1.096);transform-origin:0 0;">Phone</div>
<div class="a" id="t123" style="left:846px;top:274.1px;font-size:9px;color:#47494c;">-</div>
<div class="a" id="t124" style="left:583px;top:295.2px;font-size:7px;color:#76797c;transform:scaleX(1.096);transform-origin:0 0;">Phone</div>
<div class="a" id="t125" style="left:583px;top:306.7px;font-size:9px;color:#3b74c4;transform:scaleX(1.041);transform-origin:0 0;">+1 4082983300</div>
<div class="a" style="left:572px;top:333px;width:537px;height:225px;background:#fff;box-shadow:0 1px 2px rgba(0,0,0,.12)"></div>
<div class="a" id="t126" style="left:583px;top:342.1px;font-size:10px;color:#47494c;transform:scaleX(1.050);transform-origin:0 0;">Timeline</div>
<div class="a" style="left:573px;top:359.7px;width:536px;height:1px;background:#e8e8e8;"></div>
<div class="a" id="t127" style="left:583px;top:369.6px;font-size:7px;color:#76797c;transform:scaleX(1.115);transform-origin:0 0;">Initial Review Due</div>
<div class="a" id="t128" style="left:583px;top:380.1px;font-size:9px;color:#47494c;transform:scaleX(1.035);transform-origin:0 0;">14.07.2020 22:00</div>
<div class="a" id="t129" style="left:846px;top:369.6px;font-size:7px;color:#76797c;transform:scaleX(1.137);transform-origin:0 0;">Initial Review Completed</div>
<div class="a" id="t130" style="left:846px;top:380.1px;font-size:9px;color:#47494c;">-</div>
<div class="a" id="t131" style="left:583px;top:401.9px;font-size:7px;color:#76797c;transform:scaleX(1.131);transform-origin:0 0;">Completion Due</div>
<div class="a" id="t132" style="left:583px;top:412.4px;font-size:9px;color:#47494c;transform:scaleX(1.035);transform-origin:0 0;">22.07.2020 22:00</div>
<div class="a" id="t133" style="left:846px;top:401.9px;font-size:7px;color:#76797c;transform:scaleX(1.137);transform-origin:0 0;">Requested Start</div>
<div class="a" id="t134" style="left:846px;top:412.4px;font-size:9px;color:#47494c;transform:scaleX(1.046);transform-origin:0 0;">12.07.2020 00:00</div>
<div class="a" id="t135" style="left:583px;top:435.1px;font-size:7px;color:#76797c;transform:scaleX(1.111);transform-origin:0 0;">Requested End</div>
<div class="a" id="t136" style="left:583px;top:445.6px;font-size:9px;color:#47494c;transform:scaleX(1.035);transform-origin:0 0;">13.07.2020 00:00</div>
<div class="a" id="t137" style="left:846px;top:435.1px;font-size:7px;color:#76797c;transform:scaleX(1.142);transform-origin:0 0;">Reported On</div>
<div class="a" id="t138" style="left:846px;top:445.6px;font-size:9px;color:#47494c;transform:scaleX(1.046);transform-origin:0 0;">10.07.2020 10:23</div>
<div class="a" id="t139" style="left:583px;top:469.2px;font-size:7px;color:#76797c;transform:scaleX(1.100);transform-origin:0 0;">Due On-Site</div>
<div class="a" id="t140" style="left:583px;top:479.7px;font-size:9px;color:#47494c;">-</div>
<div class="a" id="t141" style="left:846px;top:469.2px;font-size:7px;color:#76797c;transform:scaleX(1.128);transform-origin:0 0;">Arrived On-Site</div>
<div class="a" id="t142" style="left:846px;top:479.7px;font-size:9px;color:#47494c;">-</div>
<div class="a" id="t143" style="left:583px;top:503.1px;font-size:7px;color:#76797c;transform:scaleX(1.120);transform-origin:0 0;">Resolution Due</div>
<div class="a" id="t144" style="left:583px;top:513.6px;font-size:9px;color:#47494c;">-</div>
<div class="a" id="t145" style="left:846px;top:503.1px;font-size:7px;color:#76797c;transform:scaleX(1.132);transform-origin:0 0;">Resolved On</div>
<div class="a" id="t146" style="left:846px;top:513.6px;font-size:9px;color:#47494c;">-</div>
<div class="a" id="t147" style="left:583px;top:537.1px;font-size:7px;color:#76797c;transform:scaleX(1.123);transform-origin:0 0;">Reported By</div>
<div class="a" id="t148" style="left:583px;top:547.6px;font-size:9px;color:#47494c;transform:scaleX(1.009);transform-origin:0 0;">Fabian Miller</div>
<div class="a" id="t149" style="left:846px;top:537.1px;font-size:7px;color:#76797c;transform:scaleX(1.146);transform-origin:0 0;">Time with Agent</div>
<div class="a" style="left:991px;top:83px;width:131px;height:454px;background:#fff;box-shadow:0 2px 6px rgba(0,0,0,.22)"></div>
<div class="a" id="t150" style="left:1005px;top:98.6px;font-size:9px;color:#3b74c4;transform:scaleX(0.985);transform-origin:0 0;">Escalate</div>
<div class="a" id="t151" style="left:1005px;top:130.6px;font-size:9px;color:#3b74c4;transform:scaleX(1.023);transform-origin:0 0;">Add Note</div>
<div class="a" id="t152" style="left:1005px;top:162.6px;font-size:9px;color:#3b74c4;transform:scaleX(1.018);transform-origin:0 0;">Set as Irrelevant</div>
<div class="a" id="t153" style="left:1005px;top:194.6px;font-size:9px;color:#3b74c4;transform:scaleX(1.005);transform-origin:0 0;">Assign to Me</div>
<div class="a" id="t154" style="left:1005px;top:226.6px;font-size:9px;color:#c3cfdf;transform:scaleX(0.993);transform-origin:0 0;">Finish Work</div>
<div class="a" id="t155" style="left:1005px;top:258.6px;font-size:9px;color:#3b74c4;transform:scaleX(1.013);transform-origin:0 0;">Capture Signature</div>
<div class="a" id="t156" style="left:1005px;top:290.6px;font-size:9px;color:#3b74c4;transform:scaleX(1.016);transform-origin:0 0;">Generate Summary</div>
<div class="a" id="t157" style="left:1005px;top:322.6px;font-size:9px;color:#3b74c4;transform:scaleX(1.044);transform-origin:0 0;">Submit for Approval</div>
<div class="a" id="t158" style="left:1005px;top:354.6px;font-size:9px;color:#c3cfdf;transform:scaleX(1.036);transform-origin:0 0;">Withdraw from Approval</div>
<div class="a" id="t159" style="left:1005px;top:386.6px;font-size:9px;color:#3b74c4;transform:scaleX(1.037);transform-origin:0 0;">Copy</div>
<div class="a" id="t160" style="left:1005px;top:418.6px;font-size:9px;color:#3b74c4;transform:scaleX(1.021);transform-origin:0 0;">Generate Local Summary</div>
<div class="a" id="t161" style="left:1005px;top:450.6px;font-size:9px;color:#3b74c4;transform:scaleX(1.027);transform-origin:0 0;">Get Next Ticket</div>
<div class="a" id="t162" style="left:1005px;top:514.6px;font-size:9px;color:#3b74c4;transform:scaleX(1.019);transform-origin:0 0;">Check Consistency</div>
</div>
<div class="a" style="left:972px;top:461px;width:156px;height:47px;background:#fff;border:7px solid #f0a030;border-radius:4px"></div>
<div class="a" id="t163" style="left:1005px;top:482.6px;font-size:9px;color:#3b74c4;transform:scaleX(1.018);transform-origin:0 0;">Place Service Order</div>
</body></html>
